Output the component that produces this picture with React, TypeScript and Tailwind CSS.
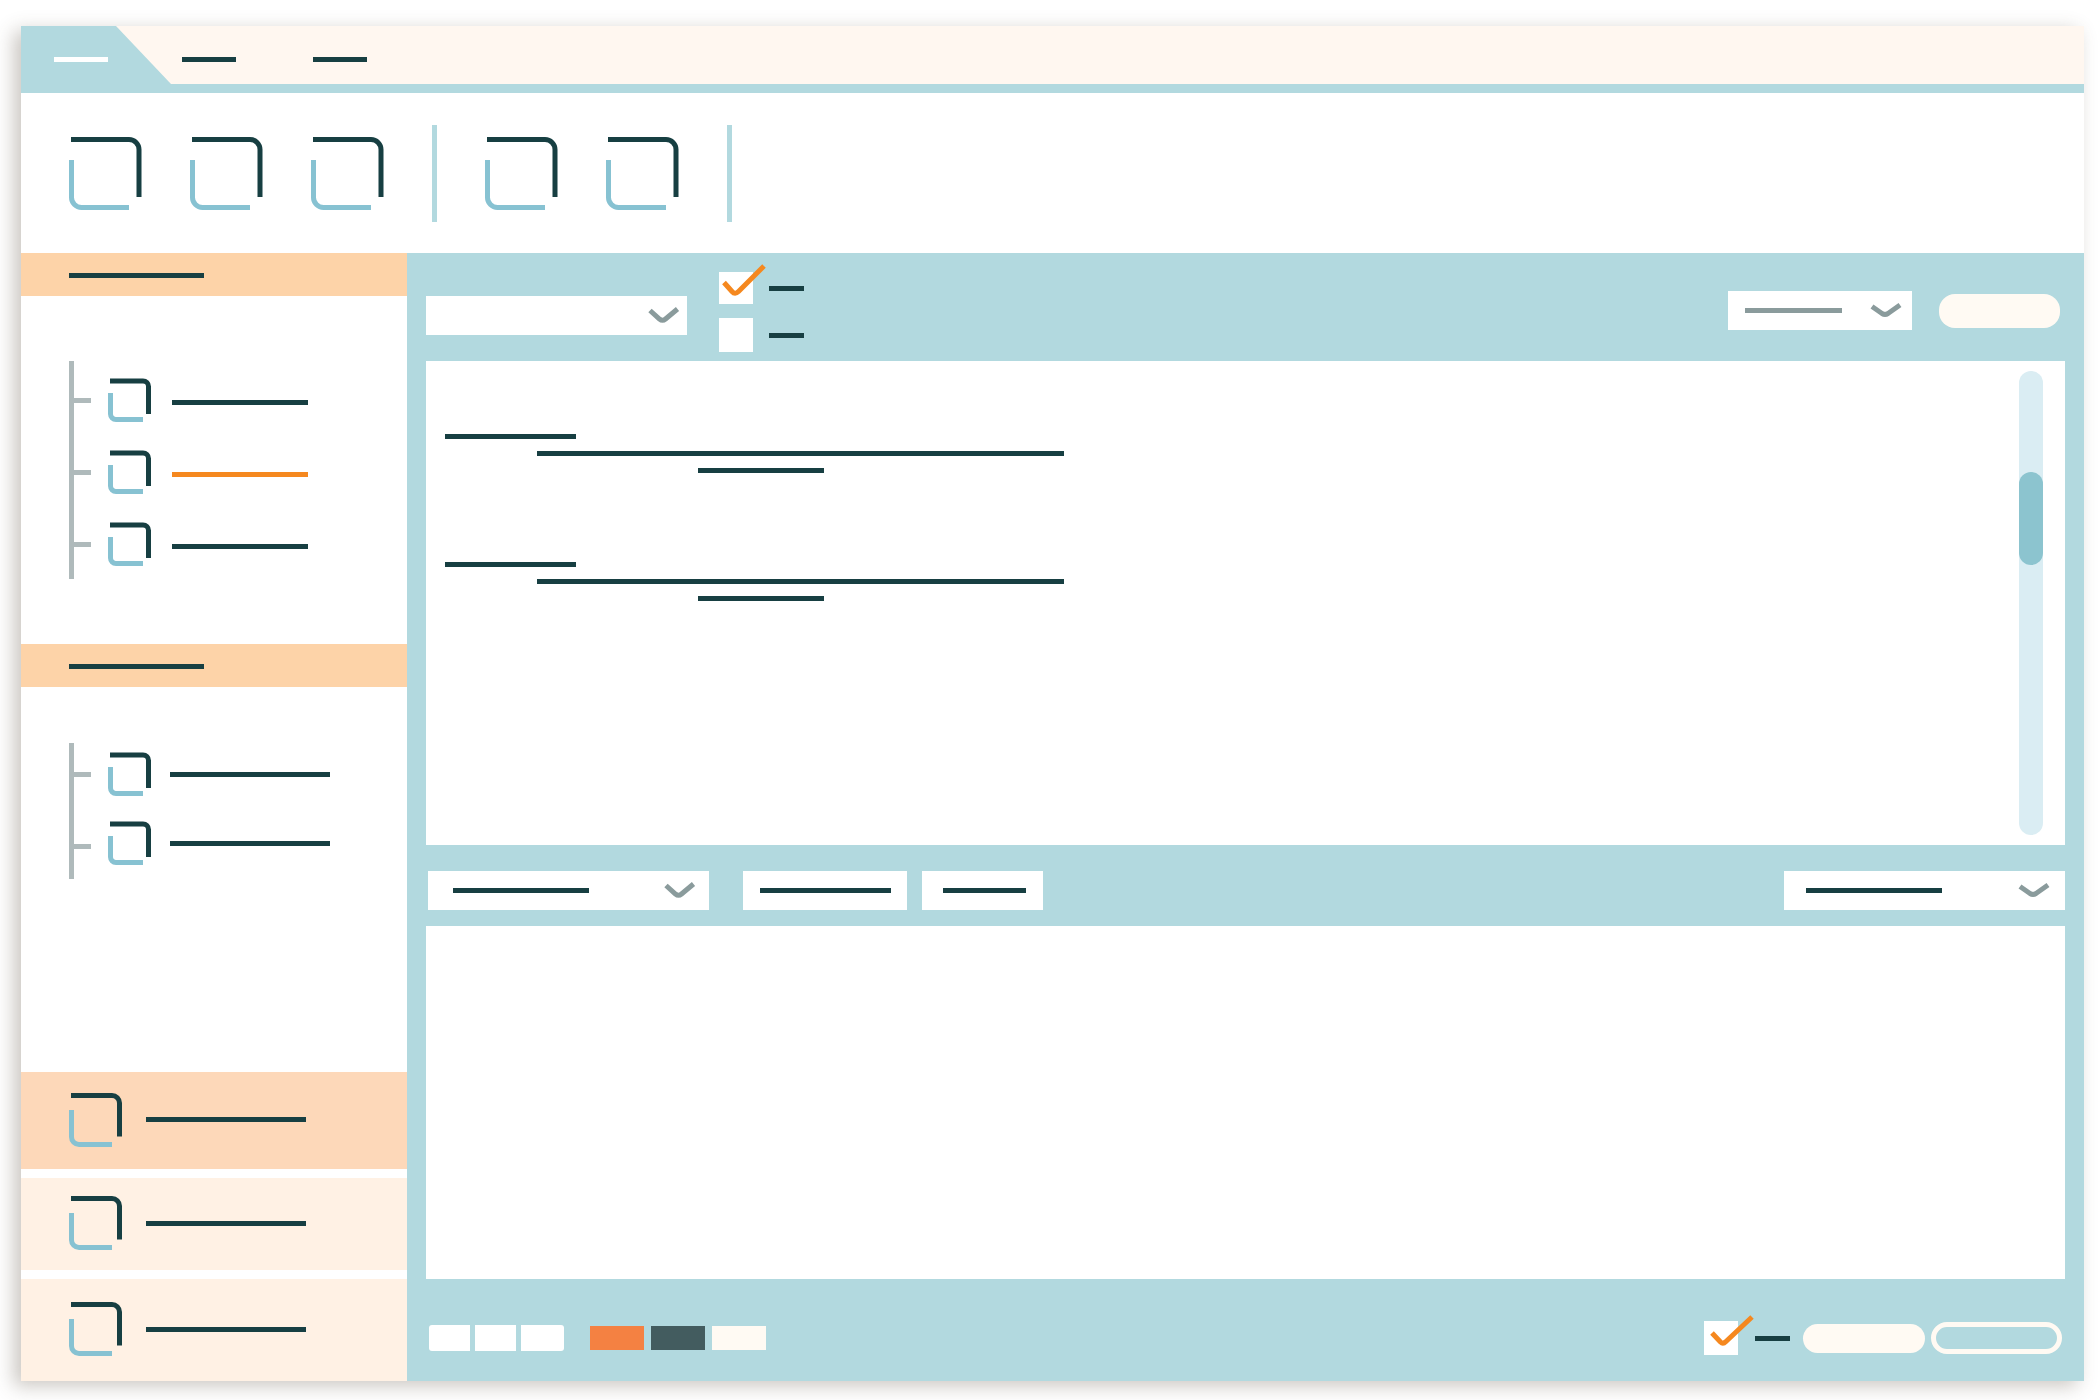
import React from "react";

const DARK = "#173f42";
const LIGHT = "#87c2d2";

/** A placeholder line standing in for a piece of text. */
function Bar({ className }: { className: string }) {
  return <span className={`block h-[5px] shrink-0 ${className}`} />;
}

function LargeIcon() {
  return (
    <svg width="73" height="73" viewBox="0 0 73 73" fill="none" strokeWidth="5" aria-hidden="true">
      <path d="M2 2.5H60A10 10 0 0 1 70 12.5V60" stroke={DARK} />
      <path d="M2.5 23V60.5A10 10 0 0 0 12.5 70.5H60" stroke={LIGHT} />
    </svg>
  );
}

function MediumIcon() {
  return (
    <svg width="53" height="54" viewBox="0 0 53 54" fill="none" strokeWidth="5" aria-hidden="true">
      <path d="M2 2.5H43A7.5 7.5 0 0 1 50.5 10V43.5" stroke={DARK} />
      <path d="M2.5 17V44A7.5 7.5 0 0 0 10 51.5H43" stroke={LIGHT} />
    </svg>
  );
}

function SmallIcon() {
  return (
    <svg width="43" height="44" viewBox="0 0 43 44" fill="none" strokeWidth="5" aria-hidden="true">
      <path d="M2 3H35A5.5 5.5 0 0 1 40.5 8.5V36" stroke={DARK} />
      <path d="M2.5 15V36A5.5 5.5 0 0 0 8 41.5H35" stroke={LIGHT} />
    </svg>
  );
}

function Chevron({ flat = false }: { flat?: boolean }) {
  return (
    <svg width="32" height="17" viewBox="0 0 32 17" fill="none" stroke="#8a9b9c" strokeWidth="5" aria-hidden="true">
      <path d={flat ? "M2 4.5L12 11.5Q15 13.3 18 11.5L30 3" : "M2 3.5L11.5 12Q14.5 14.5 17.5 12L29.5 2"} />
    </svg>
  );
}

function Dropdown({
  label,
  className,
  inner,
  bar,
  flat,
}: {
  label: string;
  className: string;
  inner: string;
  bar?: string;
  flat?: boolean;
}) {
  return (
    <div className={`relative h-[39px] shrink-0 ${className}`}>
      <select aria-label={label} className="block h-full w-full appearance-none bg-white" />
      <div className={`pointer-events-none absolute inset-0 flex items-center ${inner}`}>
        {bar && <Bar className={bar} />}
        <span className="ml-auto">
          <Chevron flat={flat} />
        </span>
      </div>
    </div>
  );
}

function Check({
  label,
  box,
  mark,
  gap,
  checked,
}: {
  label: string;
  box: string;
  mark: string;
  gap: string;
  checked?: boolean;
}) {
  return (
    <label className={`flex items-center ${gap}`}>
      <span className={`relative block w-[34px] ${box}`}>
        <input
          type="checkbox"
          aria-label={label}
          defaultChecked={checked}
          className="peer block h-full w-full appearance-none bg-white"
        />
        <svg
          className="pointer-events-none absolute top-0 left-0 hidden overflow-visible peer-checked:block"
          width="34"
          height="34"
          viewBox="0 0 34 34"
          fill="none"
          stroke="#f5881f"
          strokeWidth="5"
          aria-hidden="true"
        >
          <path d={mark} />
        </svg>
      </span>
      <Bar className="w-[35px] bg-[#173f42]" />
    </label>
  );
}

function SectionHeader() {
  return (
    <h2 className="flex h-[43px] shrink-0 items-center bg-[#fdd3a8] pt-0.5 pl-12">
      <Bar className="w-[135px] bg-[#173f42]" />
    </h2>
  );
}

function Tree({
  name,
  ticks,
  spine,
  list,
  bars,
}: {
  name: string;
  ticks: number;
  spine: string;
  list: string;
  bars: string[];
}) {
  return (
    <div className="flex pl-12">
      <div className={`flex flex-col gap-[67px] border-l-[5px] border-[#afbabb] ${spine}`}>
        {Array.from({ length: ticks }, (_, i) => (
          <Bar key={i} className="w-[17px] bg-[#afbabb]" />
        ))}
      </div>
      <ul className={`ml-[17px] flex flex-col ${list}`}>
        {bars.map((bar, i) => (
          <li key={i}>
            <button type="button" aria-label={`${name} ${i + 1}`} className="flex items-center">
              <SmallIcon />
              <Bar className={bar} />
            </button>
          </li>
        ))}
      </ul>
    </div>
  );
}

function NavBlock({ label, className }: { label: string; className: string }) {
  return (
    <button type="button" aria-label={label} className={`flex shrink-0 items-center gap-6 pb-0.5 pl-12 ${className}`}>
      <MediumIcon />
      <Bar className="w-40 bg-[#173f42]" />
    </button>
  );
}

function ToolButton({ label }: { label: string }) {
  return (
    <button type="button" aria-label={label}>
      <LargeIcon />
    </button>
  );
}

function Paragraph() {
  return (
    <div className="flex flex-col gap-3">
      <Bar className="w-[131px] bg-[#173f42]" />
      <Bar className="ml-[92px] w-[527px] bg-[#173f42]" />
      <Bar className="ml-[253px] w-[126px] bg-[#173f42]" />
    </div>
  );
}

export default function App() {
  return (
    <div className="flex min-h-screen flex-col bg-white pt-[26px] pr-4 pb-[19px] pl-[21px]">
      <div className="flex grow flex-col bg-white shadow-[-7px_5px_18px_rgba(80,65,50,0.3)]">
        <header className="border-b-[9px] border-[#b2d9df] bg-[#fff7f0]">
          <nav aria-label="Tabs" className="flex h-[58px]">
            <button
              type="button"
              aria-label="Tab 1"
              className="flex w-[150px] items-start bg-[#b2d9df] pt-[31px] pl-[33px] [clip-path:polygon(0_0,95px_0,100%_100%,0_100%)]"
            >
              <Bar className="w-[54px] bg-white" />
            </button>
            <button type="button" aria-label="Tab 2" className="flex items-start px-[11px] pt-[31px]">
              <Bar className="w-[54px] bg-[#173f42]" />
            </button>
            <button type="button" aria-label="Tab 3" className="ml-[55px] flex items-start px-[11px] pt-[31px]">
              <Bar className="w-[54px] bg-[#173f42]" />
            </button>
          </nav>
        </header>

        <div role="toolbar" aria-label="Main tools" className="flex h-40 shrink-0 items-center gap-12 pl-12">
          <ToolButton label="Tool 1" />
          <ToolButton label="Tool 2" />
          <ToolButton label="Tool 3" />
          <span className="h-[97px] w-[5px] bg-[#b2d9df]" />
          <ToolButton label="Tool 4" />
          <ToolButton label="Tool 5" />
          <span className="h-[97px] w-[5px] bg-[#b2d9df]" />
        </div>

        <div className="flex grow">
          <aside className="flex w-[386px] shrink-0 flex-col">
            <SectionHeader />
            <div className="pt-[65px] pb-[65px]">
              <Tree
                name="First group item"
                ticks={3}
                spine="h-[218px] pt-[37px]"
                list="gap-[28px] pt-[17px]"
                bars={[
                  "mt-[5px] ml-[21px] w-[136px] bg-[#173f42]",
                  "mt-[5px] ml-[21px] w-[136px] bg-[#f5881f]",
                  "mt-[5px] ml-[21px] w-[136px] bg-[#173f42]",
                ]}
              />
            </div>
            <SectionHeader />
            <div className="pt-14 pb-14">
              <Tree
                name="Second group item"
                ticks={2}
                spine="h-[136px] pt-[29px]"
                list="gap-[25px] pt-[9px]"
                bars={["ml-[19px] w-40 bg-[#173f42]", "ml-[19px] w-40 bg-[#173f42]"]}
              />
            </div>
            <div className="mt-auto flex flex-col gap-[9px]">
              <NavBlock label="Section 1" className="h-[97px] bg-[#fdd8b9]" />
              <NavBlock label="Section 2" className="h-[92px] bg-[#fff1e4]" />
              <NavBlock label="Section 3" className="h-[102px] bg-[#fff1e4]" />
            </div>
          </aside>

          <main className="flex min-w-0 flex-1 flex-col bg-[#b2d9df] px-[19px]">
            <div className="flex h-[108px] shrink-0 items-start pt-[19px]">
              <Dropdown label="Filter" className="mt-6 w-[261px]" inner="pr-[7px]" />
              <div className="ml-8 flex flex-col gap-[14px]">
                <Check
                  label="Option 1"
                  box="h-8"
                  gap="gap-4"
                  mark="M5 10.5L13 19.5Q16 23 19.5 19.5L45 -6"
                  checked
                />
                <Check label="Option 2" box="h-[34px]" gap="gap-4" mark="M5 10.5L13 19.5Q16 23 19.5 19.5L45 -6" />
              </div>
              <div className="mt-[19px] ml-auto flex items-center gap-[27px] pr-[5px]">
                <Dropdown
                  label="Sort order"
                  className="w-[184px]"
                  inner="pr-[10px] pl-[17px]"
                  bar="w-[97px] bg-[#8a9b9c]"
                  flat
                />
                <button type="button" aria-label="Apply" className="h-[34px] w-[121px] rounded-2xl bg-[#fffaf3]" />
              </div>
            </div>

            <section className="flex grow-[463] basis-0 justify-between bg-white pt-[10px] pr-[22px] pb-[10px] pl-[19px]">
              <div className="flex flex-col gap-[89px] pt-[63px]">
                <Paragraph />
                <Paragraph />
              </div>
              <div className="flex w-6 flex-col rounded-full bg-[#daedf3]">
                <span className="grow-[101] basis-0" />
                <span className="h-[93px] rounded-full bg-[#8cc4cf]" />
                <span className="grow-[270] basis-0" />
              </div>
            </section>

            <div className="flex h-[81px] shrink-0 items-start pt-[26px] pl-[2px]">
              <Dropdown
                label="View"
                className="w-[281px]"
                inner="pr-[13px] pl-[25px]"
                bar="w-[136px] bg-[#173f42]"
              />
              <button
                type="button"
                aria-label="Action 1"
                className="ml-[34px] flex h-[39px] w-[164px] items-center justify-center bg-white"
              >
                <Bar className="w-[131px] bg-[#173f42]" />
              </button>
              <button
                type="button"
                aria-label="Action 2"
                className="ml-[15px] flex h-[39px] w-[121px] items-center bg-white pl-[21px]"
              >
                <Bar className="w-[83px] bg-[#173f42]" />
              </button>
              <Dropdown
                label="Display"
                className="ml-auto w-[281px]"
                inner="pr-[15px] pl-[22px]"
                bar="w-[136px] bg-[#173f42]"
                flat
              />
            </div>

            <section className="grow-[353] basis-0 bg-white" />

            <footer className="flex h-[102px] shrink-0 items-center pt-4 pr-[3px] pl-[3px]">
              <div className="flex gap-[5px]">
                <button type="button" aria-label="Page 1" className="h-[26px] w-[41px] rounded-l-[3px] bg-white" />
                <button type="button" aria-label="Page 2" className="h-[26px] w-[41px] bg-white" />
                <button type="button" aria-label="Page 3" className="h-[26px] w-[43px] rounded-r-[3px] bg-white" />
              </div>
              <div className="ml-[26px] flex gap-[7px]">
                <button type="button" aria-label="Orange" className="h-6 w-[54px] bg-[#f48142]" />
                <button type="button" aria-label="Slate" className="h-6 w-[54px] bg-[#435c5f]" />
                <button type="button" aria-label="Cream" className="h-6 w-[54px] bg-[#fffaf3]" />
              </div>
              <div className="ml-auto flex items-center">
                <Check
                  label="Confirm"
                  box="h-[34px]"
                  gap="gap-[17px]"
                  mark="M8 12L16.5 21Q19 23.5 22 20.5L48 -4"
                  checked
                />
                <button
                  type="button"
                  aria-label="Save"
                  className="ml-[13px] h-[29px] w-[122px] rounded-full bg-[#fffaf3]"
                />
                <button
                  type="button"
                  aria-label="Cancel"
                  className="ml-[6px] h-8 w-[131px] rounded-full border-[5px] border-[#fffaf3]"
                />
              </div>
            </footer>
          </main>
        </div>
      </div>
    </div>
  );
}
